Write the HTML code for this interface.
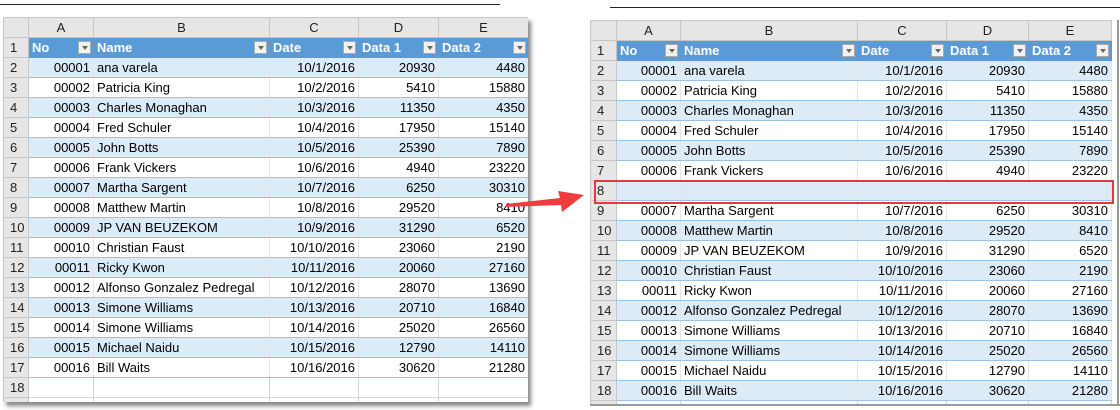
<!DOCTYPE html>
<html><head><meta charset="utf-8"><style>
body{margin:0;width:1120px;height:410px;background:#fff;position:relative;overflow:hidden;font-family:"Liberation Sans",Arial,sans-serif;font-size:13px;color:#000}
.sheet{position:absolute;background:#fff;overflow:hidden}
table{border-collapse:collapse;table-layout:fixed}
td{height:19px;padding:0 3px;border:1px solid #d4d4d4;white-space:nowrap;overflow:hidden;line-height:19px}
td.rh{background:#e6e6e6;color:#222;text-align:left;padding-left:6px;border-color:#c6c6c6}
tr.ch td{background:#e6e6e6;text-align:center;color:#222;border-color:#c6c6c6;height:18px}
tr.hd td:not(.rh){background:#5b9bd5;color:#fff;font-weight:bold;border-color:#5b9bd5;position:relative}
.dd{position:absolute;right:2px;top:3px;width:13px;height:13px;background:#f2f2f2;border:1px solid #aaa;box-sizing:border-box}
.dd:after{content:"";position:absolute;left:3px;top:4px;border-left:3px solid transparent;border-right:3px solid transparent;border-top:4px solid #666}
tr.b td:not(.rh){background:#ddebf7}
tr.d td:not(.rh){border-top:1px solid #9bc2e6;border-bottom:1px solid #9bc2e6;border-left-color:#e4e4e4;border-right-color:#e4e4e4}
.r{text-align:right}
</style></head><body>
<div style="position:absolute;left:0;top:4px;width:500px;height:1px;background:#222"></div>
<div style="position:absolute;left:610px;top:7px;width:510px;height:1px;background:#222"></div>

<div class="sheet" style="left:3px;top:17px;width:525px;height:385px;box-shadow:3px 4px 4px #888">
<table style="width:525px">
<colgroup><col style="width:25px"><col style="width:65px"><col style="width:176px"><col style="width:89px"><col style="width:80px"><col style="width:90px"></colgroup>
<tr class="ch"><td class="rh"></td><td>A</td><td>B</td><td>C</td><td>D</td><td>E</td></tr>
<tr class="hd"><td class="rh">1</td><td>No<span class="dd"></span></td><td>Name<span class="dd"></span></td><td>Date<span class="dd"></span></td><td>Data 1<span class="dd"></span></td><td>Data 2<span class="dd"></span></td></tr>
<tr class="d b"><td class="rh">2</td><td class="r">00001</td><td>ana varela</td><td class="r">10/1/2016</td><td class="r">20930</td><td class="r">4480</td></tr>
<tr class="d"><td class="rh">3</td><td class="r">00002</td><td>Patricia King</td><td class="r">10/2/2016</td><td class="r">5410</td><td class="r">15880</td></tr>
<tr class="d b"><td class="rh">4</td><td class="r">00003</td><td>Charles Monaghan</td><td class="r">10/3/2016</td><td class="r">11350</td><td class="r">4350</td></tr>
<tr class="d"><td class="rh">5</td><td class="r">00004</td><td>Fred Schuler</td><td class="r">10/4/2016</td><td class="r">17950</td><td class="r">15140</td></tr>
<tr class="d b"><td class="rh">6</td><td class="r">00005</td><td>John Botts</td><td class="r">10/5/2016</td><td class="r">25390</td><td class="r">7890</td></tr>
<tr class="d"><td class="rh">7</td><td class="r">00006</td><td>Frank Vickers</td><td class="r">10/6/2016</td><td class="r">4940</td><td class="r">23220</td></tr>
<tr class="d b"><td class="rh">8</td><td class="r">00007</td><td>Martha Sargent</td><td class="r">10/7/2016</td><td class="r">6250</td><td class="r">30310</td></tr>
<tr class="d"><td class="rh">9</td><td class="r">00008</td><td>Matthew Martin</td><td class="r">10/8/2016</td><td class="r">29520</td><td class="r">8410</td></tr>
<tr class="d b"><td class="rh">10</td><td class="r">00009</td><td>JP VAN BEUZEKOM</td><td class="r">10/9/2016</td><td class="r">31290</td><td class="r">6520</td></tr>
<tr class="d"><td class="rh">11</td><td class="r">00010</td><td>Christian Faust</td><td class="r">10/10/2016</td><td class="r">23060</td><td class="r">2190</td></tr>
<tr class="d b"><td class="rh">12</td><td class="r">00011</td><td>Ricky Kwon</td><td class="r">10/11/2016</td><td class="r">20060</td><td class="r">27160</td></tr>
<tr class="d"><td class="rh">13</td><td class="r">00012</td><td>Alfonso Gonzalez Pedregal</td><td class="r">10/12/2016</td><td class="r">28070</td><td class="r">13690</td></tr>
<tr class="d b"><td class="rh">14</td><td class="r">00013</td><td>Simone Williams</td><td class="r">10/13/2016</td><td class="r">20710</td><td class="r">16840</td></tr>
<tr class="d"><td class="rh">15</td><td class="r">00014</td><td>Simone Williams</td><td class="r">10/14/2016</td><td class="r">25020</td><td class="r">26560</td></tr>
<tr class="d b"><td class="rh">16</td><td class="r">00015</td><td>Michael Naidu</td><td class="r">10/15/2016</td><td class="r">12790</td><td class="r">14110</td></tr>
<tr class="d"><td class="rh">17</td><td class="r">00016</td><td>Bill Waits</td><td class="r">10/16/2016</td><td class="r">30620</td><td class="r">21280</td></tr>
<tr><td class="rh">18</td><td></td><td></td><td></td><td></td><td></td></tr>
<tr><td class="rh"></td><td></td><td></td><td></td><td></td><td></td></tr>
</table></div>

<svg style="position:absolute;left:500px;top:180px" width="90" height="40"><polygon points="6,24 60,18 58,11 84,15 62,32 61,25 6,27" fill="#f03c3c"/></svg>

<div class="sheet" style="left:590px;top:20px;width:527px;border-right:2px solid #999;height:384px">
<table style="width:521px">
<colgroup><col style="width:26px"><col style="width:64px"><col style="width:177px"><col style="width:89px"><col style="width:82px"><col style="width:83px"></colgroup>
<tr class="ch"><td class="rh"></td><td>A</td><td>B</td><td>C</td><td>D</td><td>E</td></tr>
<tr class="hd"><td class="rh">1</td><td>No<span class="dd"></span></td><td>Name<span class="dd"></span></td><td>Date<span class="dd"></span></td><td>Data 1<span class="dd"></span></td><td>Data 2<span class="dd"></span></td></tr>
<tr class="d b"><td class="rh">2</td><td class="r">00001</td><td>ana varela</td><td class="r">10/1/2016</td><td class="r">20930</td><td class="r">4480</td></tr>
<tr class="d"><td class="rh">3</td><td class="r">00002</td><td>Patricia King</td><td class="r">10/2/2016</td><td class="r">5410</td><td class="r">15880</td></tr>
<tr class="d b"><td class="rh">4</td><td class="r">00003</td><td>Charles Monaghan</td><td class="r">10/3/2016</td><td class="r">11350</td><td class="r">4350</td></tr>
<tr class="d"><td class="rh">5</td><td class="r">00004</td><td>Fred Schuler</td><td class="r">10/4/2016</td><td class="r">17950</td><td class="r">15140</td></tr>
<tr class="d b"><td class="rh">6</td><td class="r">00005</td><td>John Botts</td><td class="r">10/5/2016</td><td class="r">25390</td><td class="r">7890</td></tr>
<tr class="d"><td class="rh">7</td><td class="r">00006</td><td>Frank Vickers</td><td class="r">10/6/2016</td><td class="r">4940</td><td class="r">23220</td></tr>
<tr class="d b"><td class="rh">8</td><td></td><td></td><td></td><td></td><td></td></tr>
<tr class="d"><td class="rh">9</td><td class="r">00007</td><td>Martha Sargent</td><td class="r">10/7/2016</td><td class="r">6250</td><td class="r">30310</td></tr>
<tr class="d b"><td class="rh">10</td><td class="r">00008</td><td>Matthew Martin</td><td class="r">10/8/2016</td><td class="r">29520</td><td class="r">8410</td></tr>
<tr class="d"><td class="rh">11</td><td class="r">00009</td><td>JP VAN BEUZEKOM</td><td class="r">10/9/2016</td><td class="r">31290</td><td class="r">6520</td></tr>
<tr class="d b"><td class="rh">12</td><td class="r">00010</td><td>Christian Faust</td><td class="r">10/10/2016</td><td class="r">23060</td><td class="r">2190</td></tr>
<tr class="d"><td class="rh">13</td><td class="r">00011</td><td>Ricky Kwon</td><td class="r">10/11/2016</td><td class="r">20060</td><td class="r">27160</td></tr>
<tr class="d b"><td class="rh">14</td><td class="r">00012</td><td>Alfonso Gonzalez Pedregal</td><td class="r">10/12/2016</td><td class="r">28070</td><td class="r">13690</td></tr>
<tr class="d"><td class="rh">15</td><td class="r">00013</td><td>Simone Williams</td><td class="r">10/13/2016</td><td class="r">20710</td><td class="r">16840</td></tr>
<tr class="d b"><td class="rh">16</td><td class="r">00014</td><td>Simone Williams</td><td class="r">10/14/2016</td><td class="r">25020</td><td class="r">26560</td></tr>
<tr class="d"><td class="rh">17</td><td class="r">00015</td><td>Michael Naidu</td><td class="r">10/15/2016</td><td class="r">12790</td><td class="r">14110</td></tr>
<tr class="d b"><td class="rh">18</td><td class="r">00016</td><td>Bill Waits</td><td class="r">10/16/2016</td><td class="r">30620</td><td class="r">21280</td></tr>
<tr><td class="rh"></td><td></td><td></td><td></td><td></td><td></td></tr>
</table></div>
<div style="position:absolute;left:590px;top:404px;width:530px;height:2px;background:#999"></div>
<div style="position:absolute;left:594px;top:180px;width:516px;height:20px;border:2px solid #e8383d"></div>
</body></html>
